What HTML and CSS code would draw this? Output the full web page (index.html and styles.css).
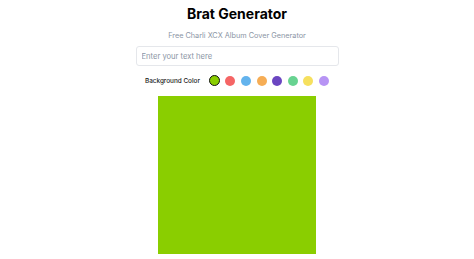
FILE: index.html
```html
<!DOCTYPE html>
<html lang="en">
<head>
<meta charset="utf-8">
<title>Brat Generator</title>
<link rel="stylesheet" href="styles.css">
</head>
<body>
<main class="page">
  <h1 class="title">Brat Generator</h1>
  <p class="subtitle">Free Charli XCX Album Cover Generator</p>
  <input class="text-input" type="text" placeholder="Enter your text here">
  <div class="color-row">
    <span class="color-label">Background Color</span>
    <div class="swatches">
      <button class="swatch swatch-green selected" aria-label="green"></button>
      <button class="swatch swatch-red" aria-label="red"></button>
      <button class="swatch swatch-blue" aria-label="blue"></button>
      <button class="swatch swatch-orange" aria-label="orange"></button>
      <button class="swatch swatch-purple" aria-label="purple"></button>
      <button class="swatch swatch-teal" aria-label="green"></button>
      <button class="swatch swatch-yellow" aria-label="yellow"></button>
      <button class="swatch swatch-lavender" aria-label="lavender"></button>
    </div>
  </div>
  <div class="cover"></div>
</main>
</body>
</html>
```

FILE: styles.css
```css
* { box-sizing: border-box; }
html, body {
  margin: 0;
  padding: 0;
  background: #ffffff;
  font-family: Inter, "Noto Sans", "Liberation Sans", sans-serif;
  color: #111827;
}
.page {
  display: flex;
  flex-direction: column;
  align-items: center;
  padding-top: 5px;
}
.title {
  margin: 0;
  font-size: 14px;
  line-height: 18px;
  font-weight: 700;
  color: #000000;
}
.subtitle {
  margin: 7px 0 0;
  font-size: 7.3px;
  line-height: 12px;
  color: #8b95a5;
}
.text-input {
  margin-top: 4px;
  width: 203px;
  height: 20px;
  border: 1px solid #e5e7eb;
  border-radius: 3px;
  padding: 0 5px;
  font-family: inherit;
  font-size: 7.6px;
  color: #111827;
  background: #ffffff;
  outline: none;
}
.text-input::placeholder { color: #8b95a5; }
.color-row {
  margin-top: 9px;
  display: flex;
  align-items: center;
  gap: 9px;
  height: 11px;
}
.color-label {
  font-size: 6.4px;
  font-weight: 500;
  color: #1a1a1a;
}
.swatches {
  display: flex;
  align-items: center;
  gap: 5.6px;
}
.swatch {
  width: 10px;
  height: 10px;
  border-radius: 50%;
  border: none;
  padding: 0;
}
.swatch.selected {
  width: 11px;
  height: 11px;
  border: 1.5px solid #111111;
}
.swatch-green { background: #8ace00; }
.swatch-red { background: #f56565; }
.swatch-blue { background: #63b3ed; }
.swatch-orange { background: #f6ad55; }
.swatch-purple { background: #6b46c1; }
.swatch-teal { background: #68d391; }
.swatch-yellow { background: #f6e05e; }
.swatch-lavender { background: #b794f4; }
.cover {
  margin-top: 9.5px;
  width: 158px;
  height: 158px;
  background: #8ace00;
}
```
